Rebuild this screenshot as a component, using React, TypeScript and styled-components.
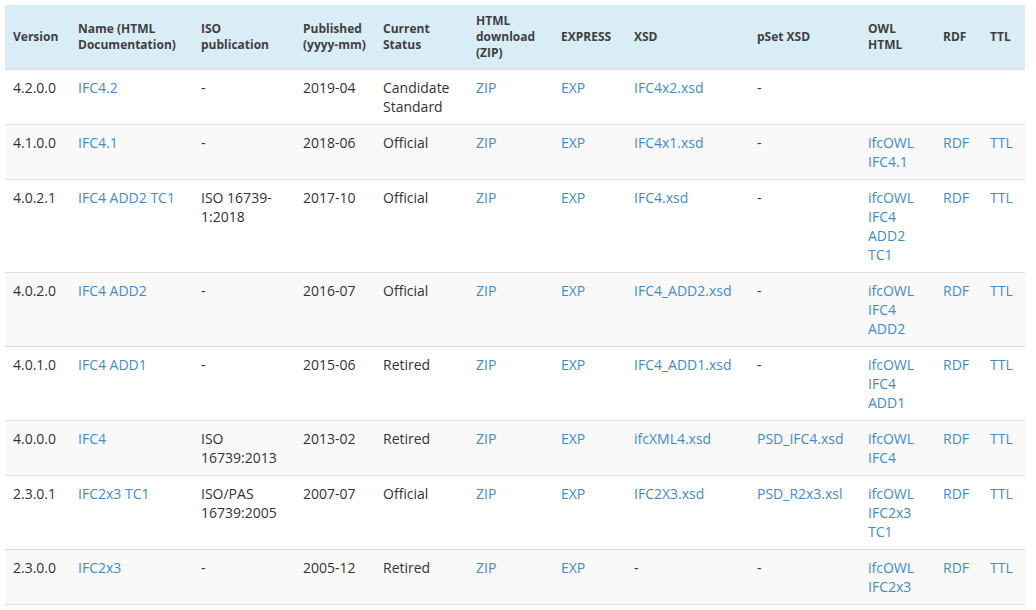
import React from "react";
import styled, { createGlobalStyle } from "styled-components";

const GlobalStyle = createGlobalStyle`
  html, body {
    margin: 0;
    padding: 0;
    background: #ffffff;
  }
  body {
    font-family: "Open Sans", "Liberation Sans", sans-serif;
    font-size: 14px;
    color: #333333;
  }
`;

const Page = styled.div`
  padding: 5px;
`;

const Table = styled.table`
  width: 1020px;
  table-layout: fixed;
  border-collapse: collapse;
  border-spacing: 0;
  border-bottom: 1px solid #dddddd;
`;

const HeadRow = styled.tr`
  background: #d9edf7;
`;

const HeadCell = styled.th`
  padding: 8px;
  text-align: left;
  vertical-align: middle;
  font-size: 12px;
  line-height: 16px;
  font-weight: 700;
  color: #3f3f3f;
  border-bottom: 1px solid #dddddd;
`;

const Row = styled.tr<{ $striped: boolean }>`
  background: ${(p) => (p.$striped ? "#f9f9f9" : "#ffffff")};
`;

const Cell = styled.td`
  padding: 8px;
  vertical-align: top;
  font-size: 14px;
  line-height: 19px;
  color: #333333;
  border-top: 1px solid #dddddd;
`;

const Link = styled.a`
  color: #3f8cd0;
  text-decoration: none;
`;

const widths = [65, 123, 102, 80, 93, 85, 73, 123, 111, 75, 47, 43];

const headers = [
  "Version",
  "Name (HTML Documentation)",
  "ISO publication",
  "Published (yyyy-mm)",
  "Current Status",
  "HTML download (ZIP)",
  "EXPRESS",
  "XSD",
  "pSet XSD",
  "OWL HTML",
  "RDF",
  "TTL",
];

type Value = { text: string; link?: boolean };

const t = (text: string): Value => ({ text });
const l = (text: string): Value => ({ text, link: true });
const dash = t("-");
const empty = t("");

const rows: Value[][] = [
  [t("4.2.0.0"), l("IFC4.2"), dash, t("2019-04"), t("Candidate Standard"), l("ZIP"), l("EXP"), l("IFC4x2.xsd"), dash, empty, empty, empty],
  [t("4.1.0.0"), l("IFC4.1"), dash, t("2018-06"), t("Official"), l("ZIP"), l("EXP"), l("IFC4x1.xsd"), dash, l("ifcOWL IFC4.1"), l("RDF"), l("TTL")],
  [t("4.0.2.1"), l("IFC4 ADD2 TC1"), t("ISO 16739-1:2018"), t("2017-10"), t("Official"), l("ZIP"), l("EXP"), l("IFC4.xsd"), dash, l("ifcOWL IFC4 ADD2 TC1"), l("RDF"), l("TTL")],
  [t("4.0.2.0"), l("IFC4 ADD2"), dash, t("2016-07"), t("Official"), l("ZIP"), l("EXP"), l("IFC4_ADD2.xsd"), dash, l("ifcOWL IFC4 ADD2"), l("RDF"), l("TTL")],
  [t("4.0.1.0"), l("IFC4 ADD1"), dash, t("2015-06"), t("Retired"), l("ZIP"), l("EXP"), l("IFC4_ADD1.xsd"), dash, l("ifcOWL IFC4 ADD1"), l("RDF"), l("TTL")],
  [t("4.0.0.0"), l("IFC4"), t("ISO 16739:2013"), t("2013-02"), t("Retired"), l("ZIP"), l("EXP"), l("ifcXML4.xsd"), l("PSD_IFC4.xsd"), l("ifcOWL IFC4"), l("RDF"), l("TTL")],
  [t("2.3.0.1"), l("IFC2x3 TC1"), t("ISO/PAS 16739:2005"), t("2007-07"), t("Official"), l("ZIP"), l("EXP"), l("IFC2X3.xsd"), l("PSD_R2x3.xsl"), l("ifcOWL IFC2x3 TC1"), l("RDF"), l("TTL")],
  [t("2.3.0.0"), l("IFC2x3"), dash, t("2005-12"), t("Retired"), l("ZIP"), l("EXP"), dash, dash, l("ifcOWL IFC2x3"), l("RDF"), l("TTL")],
];

export default function App() {
  return (
    <>
      <GlobalStyle />
      <Page>
        <Table>
          <colgroup>
            {widths.map((w, i) => (
              <col key={i} style={{ width: w }} />
            ))}
          </colgroup>
          <thead>
            <HeadRow>
              {headers.map((h) => (
                <HeadCell key={h}>{h}</HeadCell>
              ))}
            </HeadRow>
          </thead>
          <tbody>
            {rows.map((r, i) => (
              <Row key={i} $striped={i % 2 === 1}>
                {r.map((v, j) => (
                  <Cell key={j}>
                    {v.link ? <Link href="#">{v.text}</Link> : v.text}
                  </Cell>
                ))}
              </Row>
            ))}
          </tbody>
        </Table>
      </Page>
    </>
  );
}
